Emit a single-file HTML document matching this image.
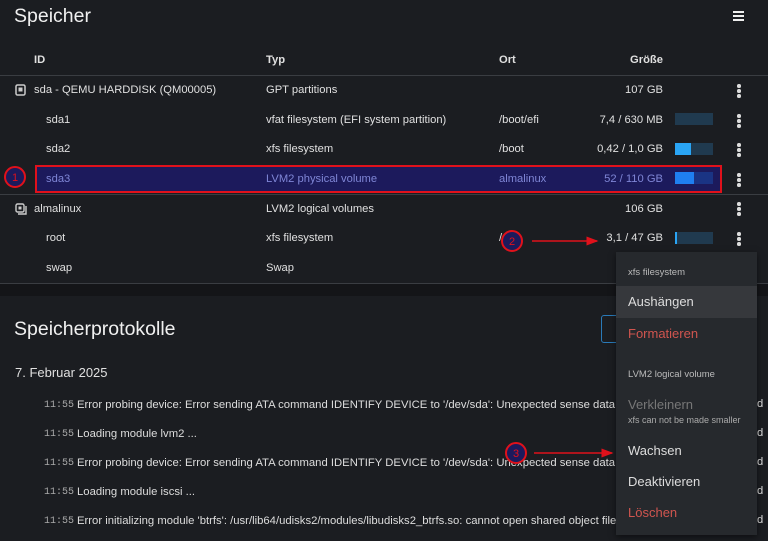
<!DOCTYPE html>
<html><head><meta charset="utf-8"><style>
*{margin:0;padding:0;box-sizing:border-box}
body{width:768px;height:541px;background:#1b1d21;color:#e0e0e0;font-family:"Liberation Sans",sans-serif;font-size:11.2px;position:relative;overflow:hidden}
.a{position:absolute;white-space:nowrap}
.hl{position:absolute;left:0;width:768px;height:1px;background:#3a3d42}
.r{text-align:right}
.bar{position:absolute;width:38px;height:12px;background:#203a4f}
.bar i{position:absolute;left:0;top:0;bottom:0;background:#2aa5f5}
.keb{position:absolute;width:4px}
.keb b{display:block;width:3.5px;height:3.5px;border-radius:50%;background:#ddd;margin-bottom:1.5px}
.menu{position:absolute;left:616px;top:252px;width:141px;height:283px;background:#26292d;box-shadow:0 2px 6px rgba(0,0,0,.5)}
.mi{position:absolute;left:12px;font-size:13px;color:#ddd}
.red{color:#d0554f}
.lt{position:absolute;left:44px;font-family:"Liberation Mono",monospace;font-size:10px;color:#aaa}
.lx{position:absolute;left:77px;font-size:11.3px;color:#ddd;white-space:nowrap}
.rw{position:absolute;white-space:nowrap}
</style></head><body>
<div class="a" style="left:14px;top:5px;font-size:19.5px;color:#f0f0f0">Speicher</div>
<div class="a" style="left:733px;top:11px;width:11px"><div style="height:2px;background:#eee;margin-bottom:2px"></div><div style="height:2px;background:#eee;margin-bottom:2px"></div><div style="height:2px;background:#eee"></div></div>

<div class="a" style="left:34px;top:54px;font-weight:bold">ID</div>
<div class="a" style="left:266px;top:54px;font-weight:bold">Typ</div>
<div class="a" style="left:499px;top:54px;font-weight:bold">Ort</div>
<div class="a r" style="left:563px;width:100px;top:54px;font-weight:bold">Größe</div>
<div class="hl" style="top:75px"></div>

<div class="a" style="left:35px;top:165px;width:687px;height:28px;background:#1c1a5c;border:2px solid #e0111b"></div>

<svg class="a" style="left:15px;top:84px" width="11" height="12"><rect x="1" y="1" width="9" height="10" rx="1.5" fill="none" stroke="#ccc" stroke-width="1.5"/><rect x="3.5" y="3.5" width="4" height="4" fill="#ccc"/></svg>
<div class="a" style="left:34px;top:84px">sda - QEMU HARDDISK (QM00005)</div>
<div class="a" style="left:266px;top:84px">GPT partitions</div>
<div class="a r" style="left:563px;width:100px;top:84px">107 GB</div>

<div class="a" style="left:46px;top:114px">sda1</div>
<div class="a" style="left:266px;top:114px">vfat filesystem (EFI system partition)</div>
<div class="a" style="left:499px;top:114px">/boot/efi</div>
<div class="a r" style="left:563px;width:100px;top:114px">7,4 / 630 MB</div>
<div class="bar" style="left:675px;top:113px"></div>

<div class="a" style="left:46px;top:143px">sda2</div>
<div class="a" style="left:266px;top:143px">xfs filesystem</div>
<div class="a" style="left:499px;top:143px">/boot</div>
<div class="a r" style="left:563px;width:100px;top:143px">0,42 / 1,0 GB</div>
<div class="bar" style="left:675px;top:143px"><i style="width:16px"></i></div>

<div class="a" style="left:46px;top:173px;color:#7f86d6">sda3</div>
<div class="a" style="left:266px;top:173px;color:#7f86d6">LVM2 physical volume</div>
<div class="a" style="left:499px;top:173px;color:#7f86d6">almalinux</div>
<div class="a r" style="left:563px;width:100px;top:173px;color:#7f86d6">52 / 110 GB</div>
<div class="bar" style="left:675px;top:172px;background:#1a3484"><i style="width:19px;background:#1f7ff0"></i></div>
<div class="hl" style="top:194px"></div>

<svg class="a" style="left:15px;top:203px" width="12" height="12"><rect x="1" y="1" width="8" height="8" rx="1.5" fill="none" stroke="#ccc" stroke-width="1.4"/><rect x="3.5" y="3.5" width="3" height="3" fill="#ccc"/><path d="M3 11h8V3" fill="none" stroke="#ccc" stroke-width="1.4"/></svg>
<div class="a" style="left:34px;top:203px">almalinux</div>
<div class="a" style="left:266px;top:203px">LVM2 logical volumes</div>
<div class="a r" style="left:563px;width:100px;top:203px">106 GB</div>

<div class="a" style="left:46px;top:232px">root</div>
<div class="a" style="left:266px;top:232px">xfs filesystem</div>
<div class="a" style="left:499px;top:232px">/</div>
<div class="a r" style="left:563px;width:100px;top:232px">3,1 / 47 GB</div>
<div class="bar" style="left:675px;top:232px"><i style="width:2px"></i></div>

<div class="a" style="left:46px;top:262px">swap</div>
<div class="a" style="left:266px;top:262px">Swap</div>

<div class="keb" style="left:737px;top:84px"><b></b><b></b><b></b></div>
<div class="keb" style="left:737px;top:114px"><b></b><b></b><b></b></div>
<div class="keb" style="left:737px;top:143px"><b></b><b></b><b></b></div>
<div class="keb" style="left:737px;top:173px"><b></b><b></b><b></b></div>
<div class="keb" style="left:737px;top:202px"><b></b><b></b><b></b></div>
<div class="keb" style="left:737px;top:232px"><b></b><b></b><b></b></div>

<div class="hl" style="top:283px"></div>
<div class="a" style="left:0;top:284px;width:768px;height:12px;background:#141518"></div>

<div class="a" style="left:14px;top:318px;font-size:19.5px;color:#f0f0f0">Speicherprotokolle</div>
<div class="a" style="left:601px;top:315px;width:20px;height:28px;border:1px solid #2a7ab8;border-radius:3px"></div>
<div class="a" style="left:15px;top:365px;font-size:13px">7. Februar 2025</div>

<div class="lt" style="top:400px">11:55</div><div class="lx" style="top:399px">Error probing device: Error sending ATA command IDENTIFY DEVICE to '/dev/sda': Unexpected sense data ret</div>
<div class="lt" style="top:429px">11:55</div><div class="lx" style="top:428px">Loading module lvm2 ...</div>
<div class="lt" style="top:458px">11:55</div><div class="lx" style="top:457px">Error probing device: Error sending ATA command IDENTIFY DEVICE to '/dev/sda': Unexpected sense data ret</div>
<div class="lt" style="top:487px">11:55</div><div class="lx" style="top:486px">Loading module iscsi ...</div>
<div class="lt" style="top:516px">11:55</div><div class="lx" style="top:515px">Error initializing module 'btrfs': /usr/lib64/udisks2/modules/libudisks2_btrfs.so: cannot open shared object file:</div>
<div class="a" style="left:757px;top:398px">d</div><div class="a" style="left:757px;top:427px">d</div><div class="a" style="left:757px;top:456px">d</div><div class="a" style="left:757px;top:485px">d</div><div class="a" style="left:757px;top:514px">d</div>

<div class="menu">
 <div class="a" style="left:12px;top:15px;font-size:9.5px;color:#bbb">xfs filesystem</div>
 <div class="a" style="left:0;top:34px;width:141px;height:32px;background:#36383c"></div>
 <div class="mi" style="top:42px">Aushängen</div>
 <div class="mi red" style="top:74px">Formatieren</div>
 <div class="a" style="left:12px;top:117px;font-size:9.5px;color:#bbb">LVM2 logical volume</div>
 <div class="mi" style="top:145px;color:#777">Verkleinern</div>
 <div class="a" style="left:12px;top:163px;font-size:9px;color:#aaa">xfs can not be made smaller</div>
 <div class="mi" style="top:191px">Wachsen</div>
 <div class="mi" style="top:222px">Deaktivieren</div>
 <div class="mi red" style="top:253px">Löschen</div>
</div>

<svg class="a" style="left:0;top:0" width="768" height="541">
 <defs><marker id="ar" markerWidth="8" markerHeight="6" refX="7" refY="3" orient="auto"><path d="M0 0L8 3L0 6z" fill="#e0111b"/></marker></defs>
 <circle cx="15" cy="177" r="10" fill="#1c1a5c" stroke="#e0111b" stroke-width="2"/>
 <text x="15" y="181" fill="#e0111b" font-size="11" text-anchor="middle" font-family="Liberation Sans">1</text>
 <circle cx="512" cy="241" r="10" fill="#1c1a5c" stroke="#e0111b" stroke-width="2"/>
 <text x="512" y="245" fill="#e0111b" font-size="11" text-anchor="middle" font-family="Liberation Sans">2</text>
 <line x1="532" y1="241" x2="597" y2="241" stroke="#e0111b" stroke-width="1.5" marker-end="url(#ar)"/>
 <circle cx="516" cy="453" r="10" fill="#1c1a5c" stroke="#e0111b" stroke-width="2"/>
 <text x="516" y="457" fill="#e0111b" font-size="11" text-anchor="middle" font-family="Liberation Sans">3</text>
 <line x1="534" y1="453" x2="612" y2="453" stroke="#e0111b" stroke-width="1.5" marker-end="url(#ar)"/>
</svg>
</body></html>
